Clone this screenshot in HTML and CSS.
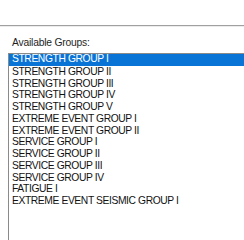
FILE: index.html
```html
<!DOCTYPE html>
<html>
<head>
<meta charset="utf-8">
<link rel="stylesheet" href="styles.css">
</head>
<body>
<div class="sep"></div>
<div class="label">Available Groups:</div>
<div class="list">
  <div class="item sel">STRENGTH GROUP I</div>
  <div class="item">STRENGTH GROUP II</div>
  <div class="item">STRENGTH GROUP III</div>
  <div class="item">STRENGTH GROUP IV</div>
  <div class="item">STRENGTH GROUP V</div>
  <div class="item">EXTREME EVENT GROUP I</div>
  <div class="item">EXTREME EVENT GROUP II</div>
  <div class="item">SERVICE GROUP I</div>
  <div class="item">SERVICE GROUP II</div>
  <div class="item">SERVICE GROUP III</div>
  <div class="item">SERVICE GROUP IV</div>
  <div class="item">FATIGUE I</div>
  <div class="item">EXTREME EVENT SEISMIC GROUP I</div>
</div>
</body>
</html>
```
FILE: styles.css
```css
html, body {
  margin: 0;
  padding: 0;
  background: #ffffff;
  overflow: hidden;
  width: 244px;
  height: 240px;
}
body {
  font-family: "Liberation Sans", Arial, sans-serif;
  font-size: 10.3px;
  letter-spacing: -0.4px;
  color: #111111;
}
.sep {
  margin-top: 25px;
  height: 1px;
  background: #a0a0a0;
  border-bottom: 1px solid #ececec;
}
.label {
  margin-top: 10px;
  padding-left: 12px;
  line-height: 12px;
  height: 16px;
  color: #1e1e1e;
  letter-spacing: -0.2px;
}
.list {
  margin-left: 8px;
  width: 236px;
  height: 187px;
  border: 1px solid #8a8a8a;
  border-right: none;
  border-bottom: none;
  box-sizing: border-box;
}
.item {
  padding-left: 3px;
  height: 11.75px;
  line-height: 11.75px;
  white-space: nowrap;
}
.item.sel {
  background: #0a74d6;
  color: #ffffff;
  height: 10px;
  line-height: 10px;
  padding-bottom: 1.75px;
}
```
